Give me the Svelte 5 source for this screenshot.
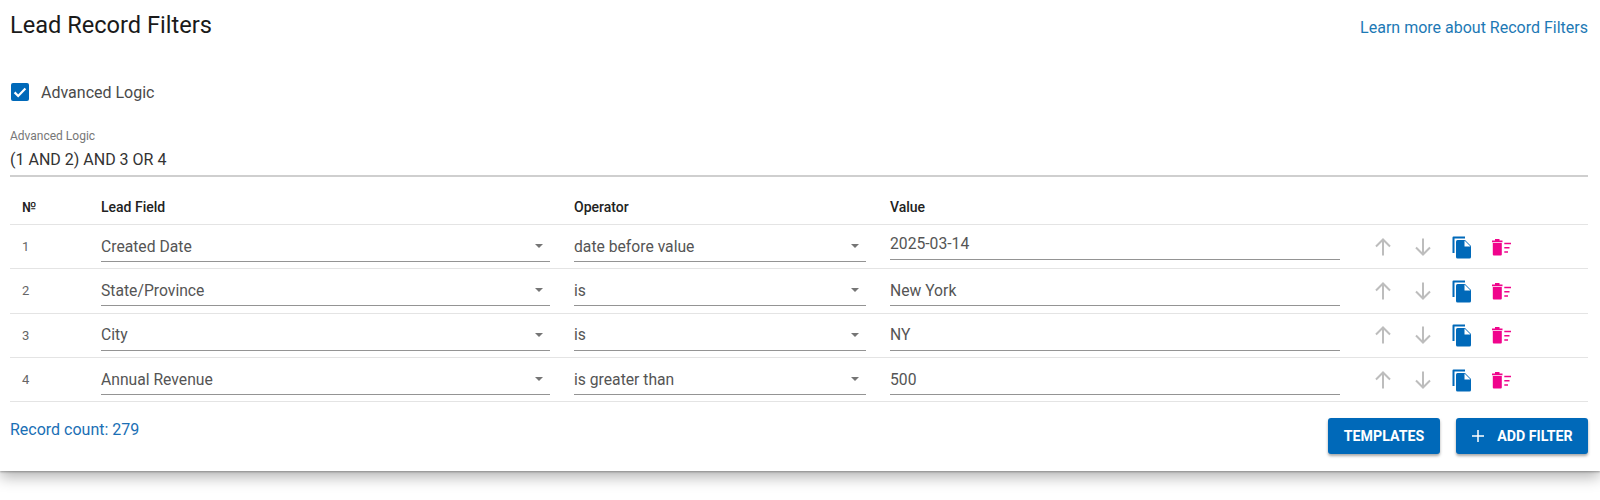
<script lang="ts">
	const rows = [
		{ n: 1, field: "Created Date", op: "date before value", value: "2025-03-14", date: true },
		{ n: 2, field: "State/Province", op: "is", value: "New York", date: false },
		{ n: 3, field: "City", op: "is", value: "NY", date: false },
		{ n: 4, field: "Annual Revenue", op: "is greater than", value: "500", date: false },
	];
</script>

<div class="page">
	<div class="card">
		<header class="top">
			<h1>Lead Record Filters</h1>
			<a href="#learn">Learn more about Record Filters</a>
		</header>

		<label class="check">
			<span class="box">
				<svg viewBox="0 0 18 18" width="18" height="18"><path d="M3.600 9.400l3.600 3.600 7.200-7.400" fill="none" stroke="#fff" stroke-width="2.200" /></svg>
			</span>
			Advanced Logic
		</label>

		<div class="logic">
			<span class="logic-label">Advanced Logic</span>
			<div class="logic-value">(1 AND 2) AND 3 OR 4</div>
		</div>

		<div class="row head">
			<div>№</div>
			<div>Lead Field</div>
			<div>Operator</div>
			<div>Value</div>
		</div>

		{#each rows as r}
			<div class="row">
				<div class="num">{r.n}</div>
				<div class="field"><span>{r.field}</span><i class="caret"></i></div>
				<div class="field"><span>{r.op}</span><i class="caret"></i></div>
				<div class="field" class:date={r.date}><span>{r.value}</span></div>
				<div class="actions">
					<svg class="arrow" viewBox="0 0 24 24" width="24" height="24"><path d="M12 20.500V5M5 11.500L12 4.500l7 7" fill="none" stroke="#bdbdbd" stroke-width="2" /></svg>
					<svg class="arrow" viewBox="0 0 24 24" width="24" height="24"><path d="M12 3.500V19M5 12.500l7 7 7-7" fill="none" stroke="#bdbdbd" stroke-width="2" /></svg>
					<svg class="copy" viewBox="0 0 22 24" width="22" height="24">
						<path d="M1.500 18V2.500a1 1 0 0 1 1-1H14v2H3.500V18z" fill="#0069b9" />
						<path d="M6.500 5H14l6 6v11a1.500 1.500 0 0 1-1.500 1.500h-12A1.500 1.500 0 0 1 5 22V6.500A1.500 1.500 0 0 1 6.500 5z" fill="#0069b9" />
						<path d="M13.500 5.500v6h6z" fill="#fff" />
					</svg>
					<svg class="trash" viewBox="0 0 22 18" width="22" height="18">
						<path d="M1 2.500h3V1h4.500v1.500h3V4.200h-10.500zM1.800 5h9v11.500a1 1 0 0 1-1 1h-7a1 1 0 0 1-1-1z" fill="#f0048c" />
						<path d="M13.300 4.800H20v1.500h-6.700zM13.300 9h5.200v1.500h-5.200zM13.300 13.300H17v1.500h-3.700z" fill="#f0048c" />
					</svg>
				</div>
			</div>
		{/each}

		<footer class="bottom">
			<div class="count">Record count: 279</div>
			<div class="buttons">
				<button class="templates">TEMPLATES</button>
				<button class="add">
					<svg viewBox="0 0 14 14" width="14" height="14"><path d="M7 1v12M1 7h12" stroke="#fff" stroke-width="1.500" fill="none" /></svg>
					ADD FILTER
				</button>
			</div>
		</footer>
	</div>
</div>

<style>
	:global(body) {
		margin: 0;
		background: #fff;
	}

	.page {
		height: 500px;
	}

	.card {
		box-sizing: border-box;
		height: 471px;
		padding: 0 12px 0 10px;
		background: #fff;
		font-family: Roboto, "Liberation Sans", sans-serif;
		color: #444;
		box-shadow: 0 1px 2px rgba(0, 0, 0, 0.3), 0 6px 14px rgba(0, 0, 0, 0.3);
	}

	.top {
		display: flex;
		justify-content: space-between;
		align-items: center;
		height: 50px;
	}

	h1 {
		margin: 0;
		font-size: 23.600px;
		font-weight: 400;
		color: #1a1a1a;
	}

	.top a {
		font-size: 16px;
		color: #1d79b5;
		text-decoration: none;
		position: relative;
		top: 2px;
	}

	.check {
		display: flex;
		align-items: center;
		gap: 12px;
		margin-top: 32px;
		height: 20px;
		font-size: 16px;
		color: #4a4a4a;
	}

	.box {
		display: flex;
		width: 18px;
		height: 18px;
		margin-left: 1px;
		background: #0069b9;
		border-radius: 2px;
	}

	.logic {
		margin-top: 27px;
		border-bottom: 2px solid #cfcfcf;
		padding-bottom: 5px;
	}

	.logic-label {
		display: block;
		font-size: 12px;
		line-height: 14px;
		color: #777;
	}

	.logic-value {
		margin-top: 7px;
		font-size: 16px;
		line-height: 20px;
		color: #333;
	}

	.row {
		display: grid;
		grid-template-columns: 55px 449px 292px 450px 1fr;
		column-gap: 24px;
		align-items: center;
		height: 44.330px;
		box-sizing: border-box;
		padding-left: 12px;
		border-bottom: 1px solid #e4e4e4;
		font-size: 15.700px;
		color: #555;
	}

	.row.head {
		grid-template-columns: 55px 449px 292px 450px;
		height: 48px;
		padding-top: 13px;
		font-size: 14px;
		font-weight: 500;
		color: #222;
	}

	.num {
		font-size: 13px;
		color: #666;
	}

	.field {
		display: flex;
		align-items: center;
		justify-content: space-between;
		height: 31px;
		box-sizing: border-box;
		border-bottom: 1px solid #949494;
	}

	.date {
		margin-bottom: 5px;
	}

	.caret {
		width: 0;
		height: 0;
		margin-right: 7px;
		border-left: 4.500px solid transparent;
		border-right: 4.500px solid transparent;
		border-top: 4.500px solid #757575;
	}

	.actions {
		display: flex;
		align-items: center;
		padding-left: 7px;
	}

	.arrow {
		margin-right: 16px;
	}

	.trash {
		margin-left: 18px;
	}

	.bottom {
		display: flex;
		justify-content: space-between;
		align-items: flex-start;
		padding-top: 16px;
	}

	.count {
		margin-top: 2px;
		font-size: 16px;
		line-height: 20px;
		color: #1a6fb5;
	}

	.buttons {
		display: flex;
		gap: 16px;
	}

	button {
		display: flex;
		align-items: center;
		justify-content: center;
		gap: 12px;
		height: 36px;
		padding: 0;
		border: 0;
		border-radius: 3px;
		background: #0069b9;
		color: #fff;
		font-family: inherit;
		font-size: 14.200px;
		font-weight: 700;
		box-shadow: 0 2px 3px rgba(0, 0, 0, 0.35);
	}

	.templates {
		width: 112px;
	}

	.add {
		width: 132px;
	}
</style>
